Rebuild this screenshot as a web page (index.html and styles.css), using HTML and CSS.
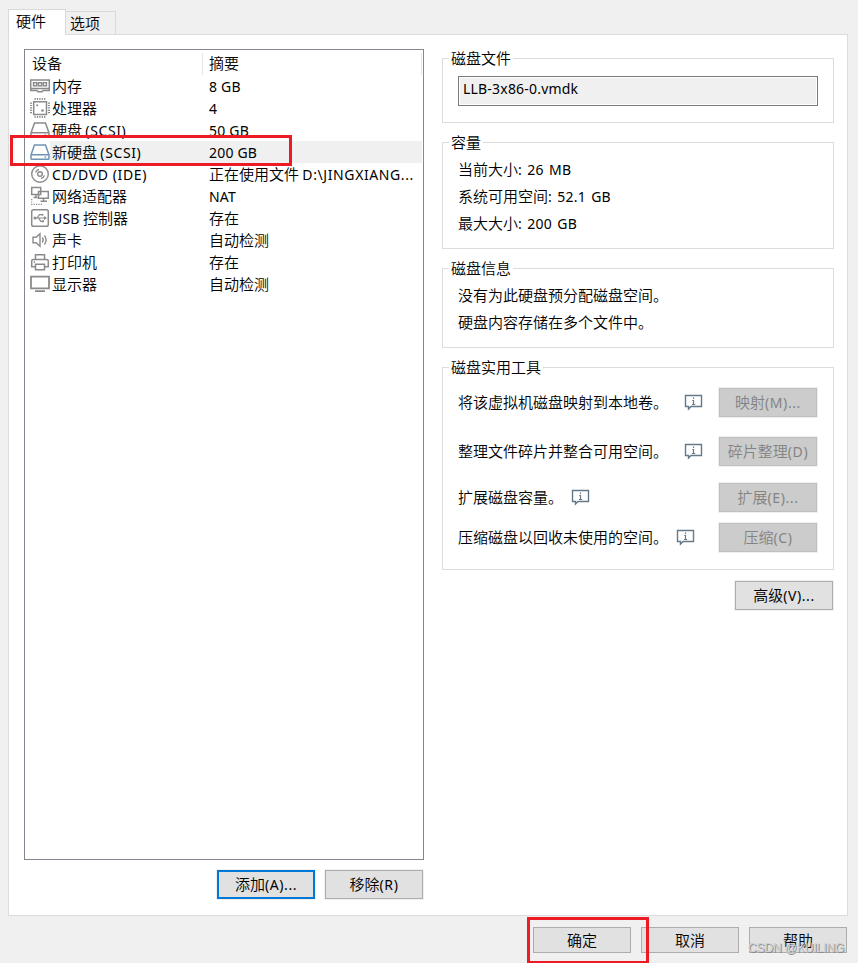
FILE: index.html
```html
<!DOCTYPE html>
<html lang="zh-CN">
<head>
<meta charset="utf-8">
<title>虚拟机设置</title>
<link rel="stylesheet" href="styles.css">
</head>
<body>
<svg class="defs" width="0" height="0" aria-hidden="true">
  <symbol id="disk" viewBox="0 0 20 20">
    <path d="M4.500 3h11l3.500 10v3.500q0 .8-.8.8H1.800q-.8 0-.8-.8V13zM1.500 12.800h17" fill="none" stroke="currentColor" stroke-width="1.500"/>
    <path d="M14.500 15.100h1.700" stroke="currentColor" stroke-width="1.300"/>
  </symbol>
  <symbol id="info" viewBox="0 0 19 17">
    <path d="M1.500 1.500h16v11H7L4.500 15v-2.500h-3z" fill="#fff" stroke="#64798a" stroke-width="1.400"/>
    <path d="M9.500 3.500v1.500M8.300 6.500h1.200v4M8 10.500h3.200" fill="none" stroke="#64798a" stroke-width="1.200"/>
  </symbol>
</svg>
<nav class="tabs">
  <div class="tab tab-active">硬件</div>
  <div class="tab">选项</div>
</nav>
<main class="panel">
  <section class="devices">
    <div class="list">
      <div class="row head"><span class="name">设备</span><span class="summary">摘要</span></div>
      <div class="row"><svg viewBox="0 0 20 20"><path d="M.7 4h18.600v10.500H13l-1 1.300H8l-1-1.300H.7zM.7 12.500h18.600" fill="none" stroke="#8b8b8b" stroke-width="1.500"/><path d="M3.500 6.800h3.200v3H3.500zM8.400 6.800h3.200v3H8.400zM13.300 6.800h3.200v3h-3.200z" fill="none" stroke="#8b8b8b" stroke-width="1.400"/></svg><span class="name">内存</span><span class="summary"><b>8 GB</b></span></div>
      <div class="row"><svg viewBox="0 0 20 20"><path d="M3.700 3.700h12.800v12.800H3.700z" fill="none" stroke="#8b8b8b" stroke-width="1.500"/><path d="M4.500 1h12M4.500 19h12" stroke="#8b8b8b" stroke-width="2" stroke-dasharray="1.200 1.200"/><path d="M1 4.500v12M19 4.500v12" stroke="#8b8b8b" stroke-width="2" stroke-dasharray="1.200 1.200"/><circle cx="7.200" cy="7.200" r="1" fill="#8b8b8b"/><circle cx="12.500" cy="12.500" r="1.300" fill="#8b8b8b"/></svg><span class="name">处理器</span><span class="summary"><b>4</b></span></div>
      <div class="row"><svg class="gray"><use href="#disk"/></svg><span class="name">硬盘 <b class="wide">(SCSI)</b></span><span class="summary"><b>50 GB</b></span></div>
      <div class="row selected"><svg class="blue"><use href="#disk"/></svg><span class="name">新硬盘 <b class="wide">(SCSI)</b></span><span class="summary"><b>200 GB</b></span></div>
      <div class="row"><svg viewBox="0 0 20 20" fill="none" stroke="#8b8b8b"><circle cx="10" cy="10" r="8.300" stroke-width="1.400"/><circle cx="10" cy="10" r="2.300" stroke-width="1.400"/><path d="M5.500 8.500q1-2.500 3.500-3M14.500 11.500q-1 2.500-3.500 3" stroke-width="1.300"/></svg><span class="name"><b class="wide">CD/DVD (IDE)</b></span><span class="summary">正在使用文件 <b class="wide">D:\JINGXIANG...</b></span></div>
      <div class="row"><svg viewBox="0 0 20 20" fill="none" stroke="#8b8b8b"><path d="M1.700 1.500h9v7h-9zM8.500 5.500h9.800v6.800H8.500z" fill="#fff" stroke-width="1.500"/><path d="M6 8.700v2.800M3.500 11.600h4M13.500 12.500v2.800M10.500 15.300h6.500" stroke-width="1.500"/><path d="M1.700 13v5.300H13" stroke-width="1.200" stroke-dasharray="1.200 1.200"/></svg><span class="name">网络适配器</span><span class="summary"><b>NAT</b></span></div>
      <div class="row"><svg viewBox="0 0 20 20" fill="none" stroke="#8b8b8b"><rect x="1.700" y="1.700" width="16.600" height="16.600" rx="1.800" stroke-width="1.500"/><path d="M4 10h11.500M7 10l2.500-3.300h2.800M8.500 10l2.300 3.300h2" stroke-width="1.200"/><path d="M14 8l3 2-3 2z" fill="#8b8b8b" stroke="none"/><circle cx="5" cy="10" r="1.500" fill="#8b8b8b" stroke="none"/><circle cx="12.500" cy="6.700" r="1" fill="#8b8b8b" stroke="none"/><path d="M12 12.300h2v2h-2z" fill="#8b8b8b" stroke="none"/></svg><span class="name"><b>USB</b> 控制器</span><span class="summary">存在</span></div>
      <div class="row"><svg viewBox="0 0 20 20" fill="none" stroke="#8b8b8b" stroke-width="1.400"><path d="M3 7.300h3l4-3.500v12.400l-4-3.500H3z"/><path d="M12.300 7.500q1.800 2.500 0 5M14.500 5.500q3.300 4.500 0 9"/></svg><span class="name">声卡</span><span class="summary">自动检测</span></div>
      <div class="row"><svg viewBox="0 0 20 20" fill="none" stroke="#8b8b8b" stroke-width="1.500"><path d="M5.500 7.500V2.700h9v4.800M5 14.800H1.700V9q0-1.500 1.500-1.500h13.600q1.500 0 1.500 1.500v5.800H15M5.500 12.300h9v5.400h-9zM3.700 9.900h1.300"/></svg><span class="name">打印机</span><span class="summary">存在</span></div>
      <div class="row"><svg viewBox="0 0 20 20" fill="none" stroke="#8b8b8b" stroke-width="1.800"><path d="M1 2.600h18v11.800H1zM5 17.100h10"/></svg><span class="name">显示器</span><span class="summary">自动检测</span></div>
    </div>
    <div class="list-actions">
      <button class="btn primary">添加<b class="wide">(A)...</b></button>
      <button class="btn">移除<b class="wide">(R)</b></button>
    </div>
  </section>
  <section class="details">
    <div class="group file">
      <h2>磁盘文件</h2>
      <div class="field"><b>LLB-3x86-0.vmdk</b></div>
    </div>
    <div class="group capacity">
      <h2>容量</h2>
      <p>当前大小<b class="value">: 26 MB</b></p>
      <p>系统可用空间<b class="value">: 52.1 GB</b></p>
      <p>最大大小<b class="value">: 200 GB</b></p>
    </div>
    <div class="group diskinfo">
      <h2>磁盘信息</h2>
      <p>没有为此硬盘预分配磁盘空间。</p>
      <p>硬盘内容存储在多个文件中。</p>
    </div>
    <div class="group tools">
      <h2>磁盘实用工具</h2>
      <div class="tool"><span>将该虚拟机磁盘映射到本地卷。</span><svg class="info far"><use href="#info"/></svg><button class="btn" disabled>映射<b class="wide">(M)...</b></button></div>
      <div class="tool defrag"><span>整理文件碎片并整合可用空间。</span><svg class="info far"><use href="#info"/></svg><button class="btn" disabled>碎片整理<b class="wide">(D)</b></button></div>
      <div class="tool expand"><span>扩展磁盘容量。</span><svg class="info"><use href="#info"/></svg><button class="btn" disabled>扩展<b class="wide">(E)...</b></button></div>
      <div class="tool compact"><span>压缩磁盘以回收未使用的空间。</span><svg class="info"><use href="#info"/></svg><button class="btn" disabled>压缩<b class="wide">(C)</b></button></div>
    </div>
    <button class="btn advanced">高级<b class="wide">(V)...</b></button>
  </section>
</main>
<footer class="footer">
  <button class="btn">确定</button>
  <button class="btn">取消</button>
  <button class="btn">帮助</button>
</footer>
<div class="mark mark-disk"></div>
<div class="mark mark-ok"></div>
<div class="watermark">CSDN @KUILING</div>
</body>
</html>
```
FILE: styles.css
```css
* { box-sizing: border-box; }
body {
  position: relative;
  margin: 0;
  width: 858px;
  height: 963px;
  padding: 9px 10px 0 8px;
  overflow: hidden;
  background: #f0f0f0;
  color: #000;
  font: 15px/22px "Noto Sans CJK SC", sans-serif;
  font-weight: 350;
}
b {
  font-family: "Noto Sans", sans-serif;
  font-size: 14px;
  font-weight: 400;
  letter-spacing: .2px;
}
.wide { letter-spacing: .6px; }
.value { word-spacing: 1.500px; }
h2, p { margin: 0; font-size: 15px; font-weight: inherit; white-space: nowrap; }
.defs { position: absolute; }

.tabs { display: flex; align-items: flex-end; height: 25px; }
.tab {
  width: 50px;
  height: 23px;
  padding-left: 4px;
  border: 1px solid #d9d9d9;
  border-left: 0;
  border-bottom: 0;
}
.tab-active {
  position: relative;
  z-index: 1;
  width: 58px;
  height: 26px;
  margin-bottom: -1px;
  padding-left: 7px;
  border-left: 1px solid #d9d9d9;
  background: #fff;
}
.panel {
  display: flex;
  gap: 18px;
  width: 840px;
  height: 882px;
  padding: 14px 0 0 15px;
  border: 1px solid #dcdcdc;
  background: #fff;
}
.devices { width: 400px; }
.list { height: 811px; padding: 3px 1px 0 5px; border: 1px solid #828790; }
.row { display: flex; height: 22px; line-height: 21px; white-space: pre; }
.row svg { flex: none; width: 20px; height: 20px; margin-top: 1px; }
.name { width: 153px; padding-left: 2px; }
.summary { flex: 1; padding-left: 6px; }
.selected .name, .selected .summary { background: #f0f0f0; }
.gray { color: #8b8b8b; }
.blue { color: #6f93b5; }
.head { margin-left: -5px; line-height: 19px; }
.head .name { width: 178px; padding-left: 7px; border-right: 1px solid #e5e5e5; }
.head .summary { border-right: 1px solid #e5e5e5; }

.list-actions { display: flex; justify-content: flex-end; gap: 10px; padding: 10px 1px 0 0; }
.btn {
  width: 98px;
  height: 29px;
  padding: 0 0 2px;
  border: 1px solid #adadad;
  outline: 1px solid #f0f0f0;
  background: #e1e1e1;
  color: #000;
  font: inherit;
  line-height: 25px;
}
.primary { border: 2px solid #0078d7; line-height: 23px; }
.btn:disabled { border-color: #bfbfbf; background: #ccc; color: #838383; }

.details { display: flex; flex-direction: column; width: 392px; padding-top: 9px; }
.group { padding: 0 15px; border: 1px solid #dcdcdc; }
.group h2 {
  width: max-content;
  height: 22px;
  margin: -12px 0 0 -9px;
  padding: 0 2px;
  background: #fff;
  line-height: 21px;
}
.file { height: 65px; }
.field {
  height: 30px;
  margin-top: 7px;
  padding: 0 4px;
  border: 1px solid #7a7a7a;
  box-shadow: inset 0 0 0 1px #fff;
  background: #f0f0f0;
  line-height: 21px;
}
.capacity { height: 107px; margin-top: 19px; }
.diskinfo { height: 80px; margin-top: 19px; }
.group p { height: 27px; line-height: 27px; }
.capacity h2 + p, .diskinfo h2 + p { margin-top: 2px; }
.tools { height: 203px; margin-top: 19px; }
.tool { display: flex; align-items: center; height: 29px; margin-top: 10px; }
.tool span { padding-bottom: 2px; }
.tool .btn { margin-left: auto; margin-right: 1px; }
.defrag { margin-top: 20px; }
.expand { margin-top: 17px; }
.compact { margin-top: 11px; }
.info { width: 19px; height: 17px; margin-left: 8px; }
.info.far { margin-left: 16px; }
.advanced { align-self: flex-end; margin: 11px 1px 0 0; }

.footer { display: flex; justify-content: flex-end; gap: 10px; padding: 11px 1px 0 0; }
.footer .btn { height: 26px; outline: 0; line-height: 24px; }

.mark { position: absolute; border: 3px solid #ed1c24; }
.mark-disk { left: 10px; top: 135px; width: 282px; height: 31px; }
.mark-ok { left: 527px; top: 917px; width: 122px; height: 47px; }
.watermark {
  position: absolute;
  left: 748px;
  top: 940px;
  color: #d0d0d0;
  text-shadow: 1px 1px 0 #8c8c8c;
  font: 12px/16px "Liberation Sans", sans-serif;
  letter-spacing: -.1px;
  white-space: nowrap;
}
```
